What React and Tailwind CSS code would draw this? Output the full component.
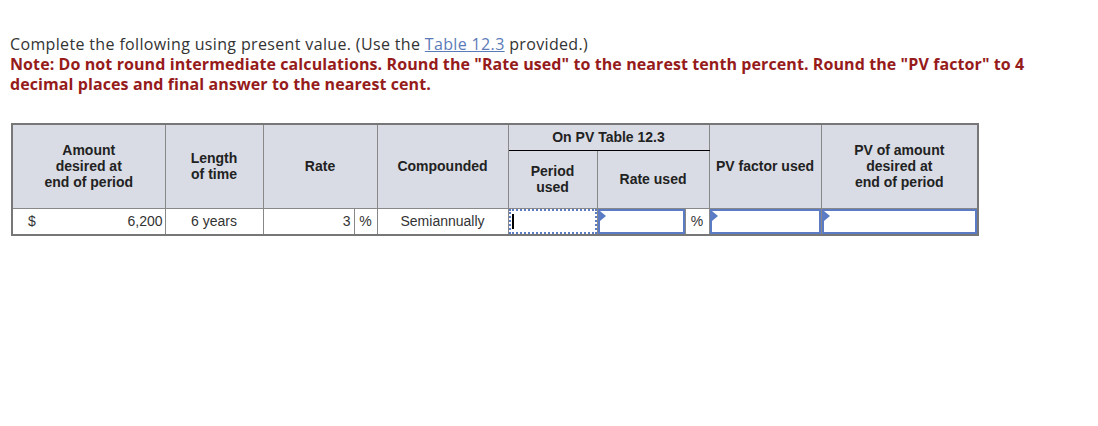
import React from 'react';

const hd = 'bg-[#d9dce5] border border-[#888] font-bold text-[14px] leading-[16px] text-[#222] text-center align-middle px-1';
const td = 'border border-[#888] text-[14px] text-[#333] h-[25px] p-0 align-middle';

const Flag = () => (
  <span className="absolute left-0 top-0 w-0 h-0 border-t-[5px] border-b-[5px] border-l-[6px] border-t-transparent border-b-transparent border-l-[#5b7bc4]" />
);

const AnswerBox = ({ focused }) =>
  focused ? (
    <div className="relative h-[25px] border-2 border-dotted border-[#5b7bc4]">
      <span className="absolute left-[1px] top-[3px] w-[2px] h-[15px] bg-black" />
    </div>
  ) : (
    <div className="relative h-[25px] border-2 border-[#5b7bc4] bg-white">
      <Flag />
    </div>
  );

export default function App() {
  return (
    <div className="w-[1098px] h-[426px] bg-white font-['Liberation_Sans',Arial,sans-serif]">
      <div className="pt-[34px] px-[10px] w-[1088px] text-[16px] leading-[20px] font-['Open_Sans',sans-serif]">
        <p className="text-[#333] tracking-[0.35px]">
          Complete the following using present value. (Use the{' '}
          <span className="text-[#5b7bb8] underline">Table 12.3</span> provided.)
        </p>
        <p className="text-[#961b1b] font-bold tracking-[0.09px]">
          Note: Do not round intermediate calculations. Round the "Rate used" to the nearest tenth percent. Round the "PV
          factor" to 4 decimal places and final answer to the nearest cent.
        </p>
      </div>

      <div className="pl-[11px] pt-[29px]">
        <table className="table-fixed border-collapse border-2 border-[#777] w-[967px]">
          <colgroup>
            <col className="w-[153px]" />
            <col className="w-[98px]" />
            <col className="w-[91px]" />
            <col className="w-[23px]" />
            <col className="w-[131px]" />
            <col className="w-[89px]" />
            <col className="w-[88px]" />
            <col className="w-[24px]" />
            <col className="w-[112px]" />
            <col className="w-[157px]" />
          </colgroup>
          <thead>
            <tr className="h-[26px]">
              <th rowSpan={2} className={hd}>
                Amount
                <br />
                desired at
                <br />
                end of period
              </th>
              <th rowSpan={2} className={hd}>
                Length
                <br />
                of time
              </th>
              <th rowSpan={2} colSpan={2} className={hd}>
                Rate
              </th>
              <th rowSpan={2} className={hd}>
                Compounded
              </th>
              <th colSpan={3} className={`${hd} border-b-black`}>
                On PV Table 12.3
              </th>
              <th rowSpan={2} className={hd}>
                PV factor used
              </th>
              <th rowSpan={2} className={hd}>
                PV of amount
                <br />
                desired at
                <br />
                end of period
              </th>
            </tr>
            <tr className="h-[58px]">
              <th className={hd}>
                Period
                <br />
                used
              </th>
              <th colSpan={2} className={hd}>
                Rate used
              </th>
            </tr>
          </thead>
          <tbody>
            <tr>
              <td className={td}>
                <div className="flex justify-between px-[2px]">
                  <span className="pl-[13px]">$</span>
                  <span>6,200</span>
                </div>
              </td>
              <td className={`${td} text-center`}>6 years</td>
              <td className={`${td} text-right pr-[3px]`}>3</td>
              <td className={`${td} text-center`}>%</td>
              <td className={`${td} text-center`}>Semiannually</td>
              <td className={td}>
                <AnswerBox focused />
              </td>
              <td className={td}>
                <AnswerBox />
              </td>
              <td className={`${td} text-center`}>%</td>
              <td className={td}>
                <AnswerBox />
              </td>
              <td className={td}>
                <AnswerBox />
              </td>
            </tr>
          </tbody>
        </table>
      </div>
    </div>
  );
}
